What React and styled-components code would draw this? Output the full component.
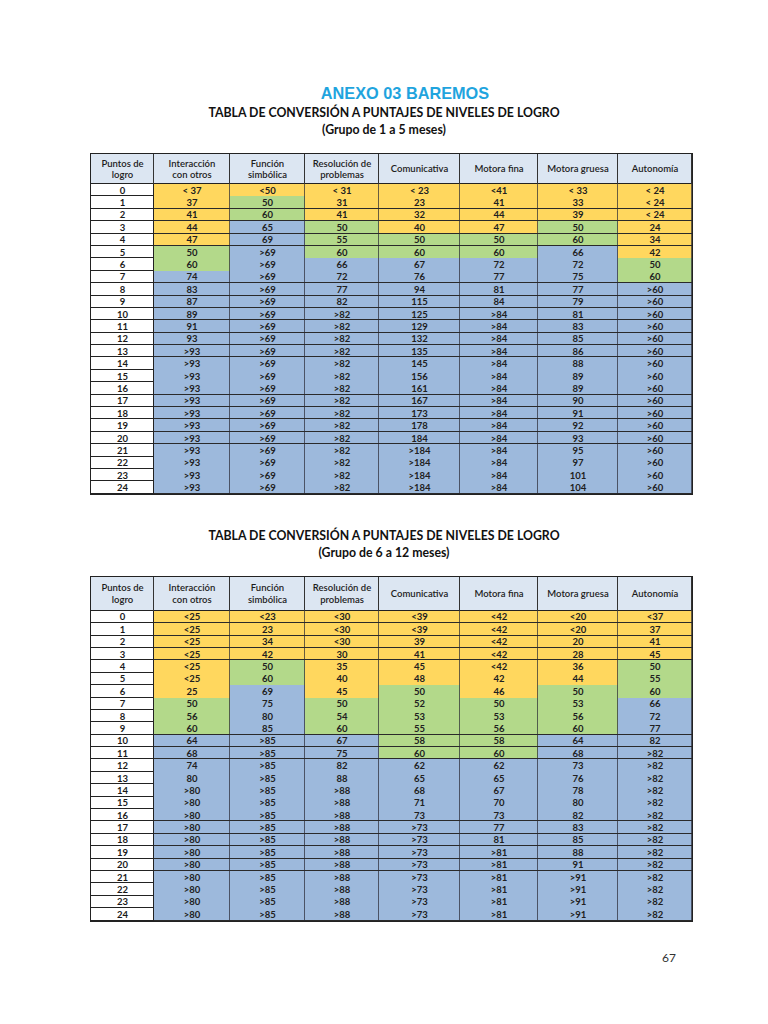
import styled, { createGlobalStyle } from 'styled-components';

const GlobalStyle = createGlobalStyle`
  html, body {
    margin: 0;
    padding: 0;
    background: #ffffff;
  }
  body {
    font-family: Lato, "Open Sans", "Liberation Sans", sans-serif;
    color: #1a1a1a;
  }
`;

const tones = {
  Y: '#ffd75e',
  G: '#b3d98a',
  B: '#9db9dc',
};

const Page = styled.div`
  width: 768px;
  min-height: 1024px;
  box-sizing: border-box;
  padding: 84px 0 0;
  display: flex;
  flex-direction: column;
  align-items: center;
`;

const Annex = styled.h1`
  margin: 0 0 2px 42px;
  font-family: "Liberation Sans", Arial, sans-serif;
  font-size: 16.3px;
  line-height: 18px;
  font-weight: 700;
  color: #1fa4de;
`;

const Heading = styled.h2`
  margin: 0;
  font-family: Lato, "Open Sans", sans-serif;
  font-size: 12.3px;
  line-height: 17px;
  font-weight: 700;
  color: #111;
  text-align: center;
`;

const Section = styled.section`
  display: flex;
  flex-direction: column;
  align-items: center;
  margin-top: ${p => p.$top || 0}px;
`;

const Grid = styled.div`
  margin: ${p => p.$gap}px 0 0 15px;
  display: grid;
  grid-template-columns: 63px 76px 75px 74px 81px 78px 80px 74px;
  grid-template-rows: ${p => p.$head}px;
  grid-auto-rows: 12.4px;
  border: 1px solid #222;
`;

const HeadCell = styled.div`
  display: flex;
  align-items: center;
  justify-content: center;
  text-align: center;
  background: #dce6f2;
  font-size: 9.5px;
  line-height: 11.5px;
  font-weight: 600;
  color: #1c1c1c;
  box-shadow: inset -1px 0 0 #333, inset 0 -1px 0 #222;
`;

const PointCell = styled.div`
  display: flex;
  align-items: center;
  justify-content: center;
  background: #fff;
  font-size: 9.5px;
  font-weight: 700;
  box-shadow: inset -1px 0 0 #222, inset 0 -1px 0 #222;
`;

const Cell = styled.div`
  display: flex;
  align-items: center;
  justify-content: center;
  background: ${p => tones[p.$tone]};
  font-size: 9.5px;
  font-weight: 700;
  color: #202020;
  box-shadow: inset -1px 0 0 rgba(40, 40, 50, 0.7)
    ${p => (p.$ruled ? ', inset 0 -1px 0 #2a2a2a' : '')};
`;

const PageNumber = styled.div`
  align-self: flex-end;
  margin: 28px 92px 0 0;
  font-size: 12px;
  color: #333;
`;

const headers = [
  ['Puntos de', 'logro'],
  ['Interacción', 'con otros'],
  ['Función', 'simbólica'],
  ['Resolución de', 'problemas'],
  ['Comunicativa'],
  ['Motora fina'],
  ['Motora gruesa'],
  ['Autonomía'],
];

// each row: "value:tone" pairs, tone defaults to B
const firstTable = [
  '< 37:Y <50:Y < 31:Y < 23:Y <41:Y < 33:Y < 24:Y',
  '37:Y 50:G 31:Y 23:Y 41:Y 33:Y < 24:Y',
  '41:Y 60:G 41:Y 32:Y 44:Y 39:Y < 24:Y',
  '44:Y 65 50:G 40:Y 47:Y 50:G 24:Y',
  '47:Y 69 55:G 50:G 50:G 60:G 34:Y',
  '50:G >69 60:G 60:G 60:G 66 42:Y',
  '60:G >69 66 67 72 72 50:G',
  '74 >69 72 76 77 75 60:G',
  '83 >69 77 94 81 77 >60',
  '87 >69 82 115 84 79 >60',
  '89 >69 >82 125 >84 81 >60',
  '91 >69 >82 129 >84 83 >60',
  '93 >69 >82 132 >84 85 >60',
  '>93 >69 >82 135 >84 86 >60',
  '>93 >69 >82 145 >84 88 >60',
  '>93 >69 >82 156 >84 89 >60',
  '>93 >69 >82 161 >84 89 >60',
  '>93 >69 >82 167 >84 90 >60',
  '>93 >69 >82 173 >84 91 >60',
  '>93 >69 >82 178 >84 92 >60',
  '>93 >69 >82 184 >84 93 >60',
  '>93 >69 >82 >184 >84 95 >60',
  '>93 >69 >82 >184 >84 97 >60',
  '>93 >69 >82 >184 >84 101 >60',
  '>93 >69 >82 >184 >84 104 >60',
];

const secondTable = [
  '<25:Y <23:Y <30:Y <39:Y <42:Y <20:Y <37:Y',
  '<25:Y 23:Y <30:Y <39:Y <42:Y <20:Y 37:Y',
  '<25:Y 34:Y <30:Y 39:Y <42:Y 20:Y 41:Y',
  '<25:Y 42:Y 30:Y 41:Y <42:Y 28:Y 45:Y',
  '<25:Y 50:G 35:Y 45:Y <42:Y 36:Y 50:G',
  '<25:Y 60:G 40:Y 48:Y 42:Y 44:Y 55:G',
  '25:Y 69 45:Y 50:G 46:Y 50:G 60:G',
  '50:G 75 50:G 52:G 50:G 53:G 66',
  '56:G 80 54:G 53:G 53:G 56:G 72',
  '60:G 85 60:G 55:G 56:G 60:G 77',
  '64 >85 67 58:G 58:G 64 82',
  '68 >85 75 60:G 60:G 68 >82',
  '74 >85 82 62 62 73 >82',
  '80 >85 88 65 65 76 >82',
  '>80 >85 >88 68 67 78 >82',
  '>80 >85 >88 71 70 80 >82',
  '>80 >85 >88 73 73 82 >82',
  '>80 >85 >88 >73 77 83 >82',
  '>80 >85 >88 >73 81 85 >82',
  '>80 >85 >88 >73 >81 88 >82',
  '>80 >85 >88 >73 >81 91 >82',
  '>80 >85 >88 >73 >81 >91 >82',
  '>80 >85 >88 >73 >81 >91 >82',
  '>80 >85 >88 >73 >81 >91 >82',
  '>80 >85 >88 >73 >81 >91 >82',
];

const parseRow = row =>
  row
    .replace(/< (\d)/g, '<\u00a0$1')
    .split(' ')
    .map(token => {
      const [value, tone = 'B'] = token.split(':');
      return { value: value.replace('\u00a0', ' '), tone };
    });

const ScoreTable = ({ rows, ruled, head, gap }) => (
  <Grid $head={head} $gap={gap}>
    {headers.map(lines => (
      <HeadCell key={lines.join()}>
        <span>
          {lines.map((line, i) => (
            <div key={i}>{line}</div>
          ))}
        </span>
      </HeadCell>
    ))}
    {rows.map((row, r) => [
      <PointCell key={`p${r}`}>{r}</PointCell>,
      ...parseRow(row).map((cell, c) => (
        <Cell key={`${r}-${c}`} $tone={cell.tone} $ruled={ruled.includes(r) || r === 24}>
          {cell.value}
        </Cell>
      )),
    ])}
  </Grid>
);

const App = () => (
  <>
    <GlobalStyle />
    <Page>
      <Annex>ANEXO 03 BAREMOS</Annex>
      <Section>
        <Heading>TABLA DE CONVERSIÓN A PUNTAJES DE NIVELES DE LOGRO</Heading>
        <Heading>(Grupo de 1 a 5 meses)</Heading>
        <ScoreTable
          rows={firstTable}
          head={30}
          gap={15}
          ruled={[1, 2, 3, 4, 7, 8, 9, 10, 11, 12, 13, 16, 17, 18, 19, 20]}
        />
      </Section>
      <Section $top={32}>
        <Heading>TABLA DE CONVERSIÓN A PUNTAJES DE NIVELES DE LOGRO</Heading>
        <Heading>(Grupo de 6 a 12 meses)</Heading>
        <ScoreTable
          rows={secondTable}
          head={34}
          gap={15}
          ruled={[0, 1, 2, 3, 9, 10, 11, 16, 17, 18, 19, 20]}
        />
      </Section>
      <PageNumber>67</PageNumber>
    </Page>
  </>
);

export default App;
